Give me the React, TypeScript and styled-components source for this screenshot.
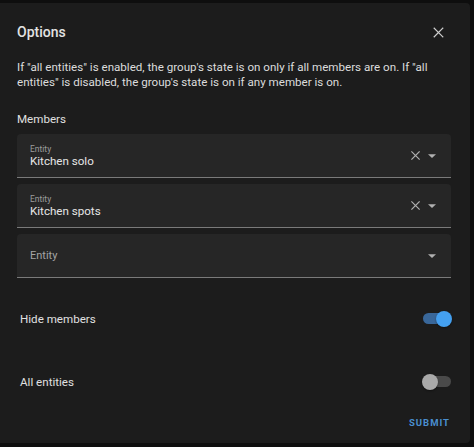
import React from 'react'
import styled, { createGlobalStyle } from 'styled-components'

const GlobalStyle = createGlobalStyle`
  html, body {
    margin: 0;
    padding: 0;
    background: #0e0e0e;
  }
  body {
    font-family: Roboto, "Noto Sans", sans-serif;
    -webkit-font-smoothing: antialiased;
  }
`

const Dialog = styled.div`
  width: 470px;
  height: 440px;
  margin-top: 3px;
  background: #1c1c1c;
  border-radius: 0 4px 4px 0;
  color: #e1e1e1;
  display: flex;
  flex-direction: column;
  box-sizing: border-box;
`

const Header = styled.div`
  display: flex;
  align-items: center;
  justify-content: space-between;
  padding: 19px 22px 0 17px;
  height: 20px;
`

const Title = styled.h2`
  margin: 0;
  font-size: 14px;
  font-weight: 500;
  line-height: 20px;
  color: #e3e3e3;
`

const IconButton = styled.button`
  background: none;
  border: 0;
  padding: 0;
  width: 20px;
  height: 20px;
  display: flex;
  align-items: center;
  justify-content: center;
  color: #cfcfcf;
  cursor: pointer;
`

const Body = styled.div`
  padding: 0 19px 0 17px;
  display: flex;
  flex-direction: column;
`

const Description = styled.p`
  margin: 18px 0 0;
  font-size: 11.6px;
  line-height: 15px;
  color: #dcdcdc;
`

const SectionLabel = styled.div`
  margin-top: 21px;
  font-size: 11.6px;
  line-height: 16px;
  color: #e0e0e0;
`

const Fields = styled.div`
  margin-top: 7px;
  display: flex;
  flex-direction: column;
  gap: 6px;
`

const Field = styled.div`
  position: relative;
  height: 44px;
  background: #262626;
  border-radius: 4px 4px 0 0;
  border-bottom: 1px solid #7a7a7a;
  box-sizing: border-box;
  display: flex;
  align-items: center;
  padding: 0 14px 0 13px;
`

const FieldText = styled.div`
  flex: 1;
  display: flex;
  flex-direction: column;
  justify-content: center;
`

const FloatLabel = styled.span`
  font-size: 8.5px;
  line-height: 10px;
  color: #9c9c9c;
  margin-top: 2px;
`

const Value = styled.span`
  font-size: 11.6px;
  line-height: 15px;
  color: #e6e6e6;
`

const Placeholder = styled.span`
  font-size: 11px;
  line-height: 15px;
  color: #a4a4a4;
`

const FieldIcons = styled.div`
  display: flex;
  align-items: center;
  gap: 6px;
  color: #b0b0b0;
`

const ToggleRow = styled.div`
  height: 63px;
  display: flex;
  align-items: center;
  justify-content: space-between;
  padding: 0 18px 0 20px;
`

const RowLabel = styled.span`
  font-size: 11.6px;
  color: #e0e0e0;
`

const Switch = styled.div<{ $on: boolean }>`
  position: relative;
  width: 30px;
  height: 16px;
  display: flex;
  align-items: center;

  &::before {
    content: '';
    display: block;
    width: 28px;
    height: 11px;
    margin-left: 1px;
    border-radius: 6px;
    background: ${p => (p.$on ? '#39679a' : '#4a4a4a')};
  }

  &::after {
    content: '';
    position: absolute;
    top: 0;
    left: ${p => (p.$on ? '14px' : '0')};
    width: 16px;
    height: 16px;
    border-radius: 50%;
    background: ${p => (p.$on ? '#44a0f0' : '#a9a9a9')};
    box-shadow: 0 1px 2px rgba(0, 0, 0, 0.4);
  }
`

const Footer = styled.div`
  display: flex;
  justify-content: flex-end;
  padding: 0 20px 0 0;
`

const SubmitButton = styled.button`
  background: none;
  border: 0;
  padding: 0;
  font-family: inherit;
  font-size: 9.5px;
  font-weight: 700;
  letter-spacing: 1px;
  line-height: 20px;
  color: #4a8fd0;
  cursor: pointer;
`

const Spacer = styled.div`
  height: 9px;
`

const CloseIcon = ({ size, stroke }: { size: number; stroke: number }) => (
  <svg width={size} height={size} viewBox="0 0 24 24" fill="none">
    <path d="M4 4L20 20M20 4L4 20" stroke="currentColor" strokeWidth={stroke} strokeLinecap="square" />
  </svg>
)

const Caret = () => (
  <svg width="10" height="10" viewBox="0 0 10 10">
    <path d="M1 3.2h8L5 7z" fill="currentColor" />
  </svg>
)

const members = ['Kitchen solo', 'Kitchen spots']

export default function App() {
  return (
    <>
      <GlobalStyle />
      <Dialog>
        <Header>
          <Title>Options</Title>
          <IconButton aria-label="Close">
            <CloseIcon size={13} stroke={2.2} />
          </IconButton>
        </Header>
        <Body>
          <Description>
            If "all entities" is enabled, the group's state is on only if all members are on. If "all
            entities" is disabled, the group's state is on if any member is on.
          </Description>
          <SectionLabel>Members</SectionLabel>
          <Fields>
            {members.map(name => (
              <Field key={name}>
                <FieldText>
                  <FloatLabel>Entity</FloatLabel>
                  <Value>{name}</Value>
                </FieldText>
                <FieldIcons>
                  <CloseIcon size={11} stroke={2.6} />
                  <Caret />
                </FieldIcons>
              </Field>
            ))}
            <Field>
              <FieldText>
                <Placeholder>Entity</Placeholder>
              </FieldText>
              <FieldIcons>
                <Caret />
              </FieldIcons>
            </Field>
          </Fields>
        </Body>
        <Spacer />
        <ToggleRow>
          <RowLabel>Hide members</RowLabel>
          <Switch $on />
        </ToggleRow>
        <ToggleRow>
          <RowLabel>All entities</RowLabel>
          <Switch $on={false} />
        </ToggleRow>
        <Footer>
          <SubmitButton>SUBMIT</SubmitButton>
        </Footer>
      </Dialog>
    </>
  )
}
